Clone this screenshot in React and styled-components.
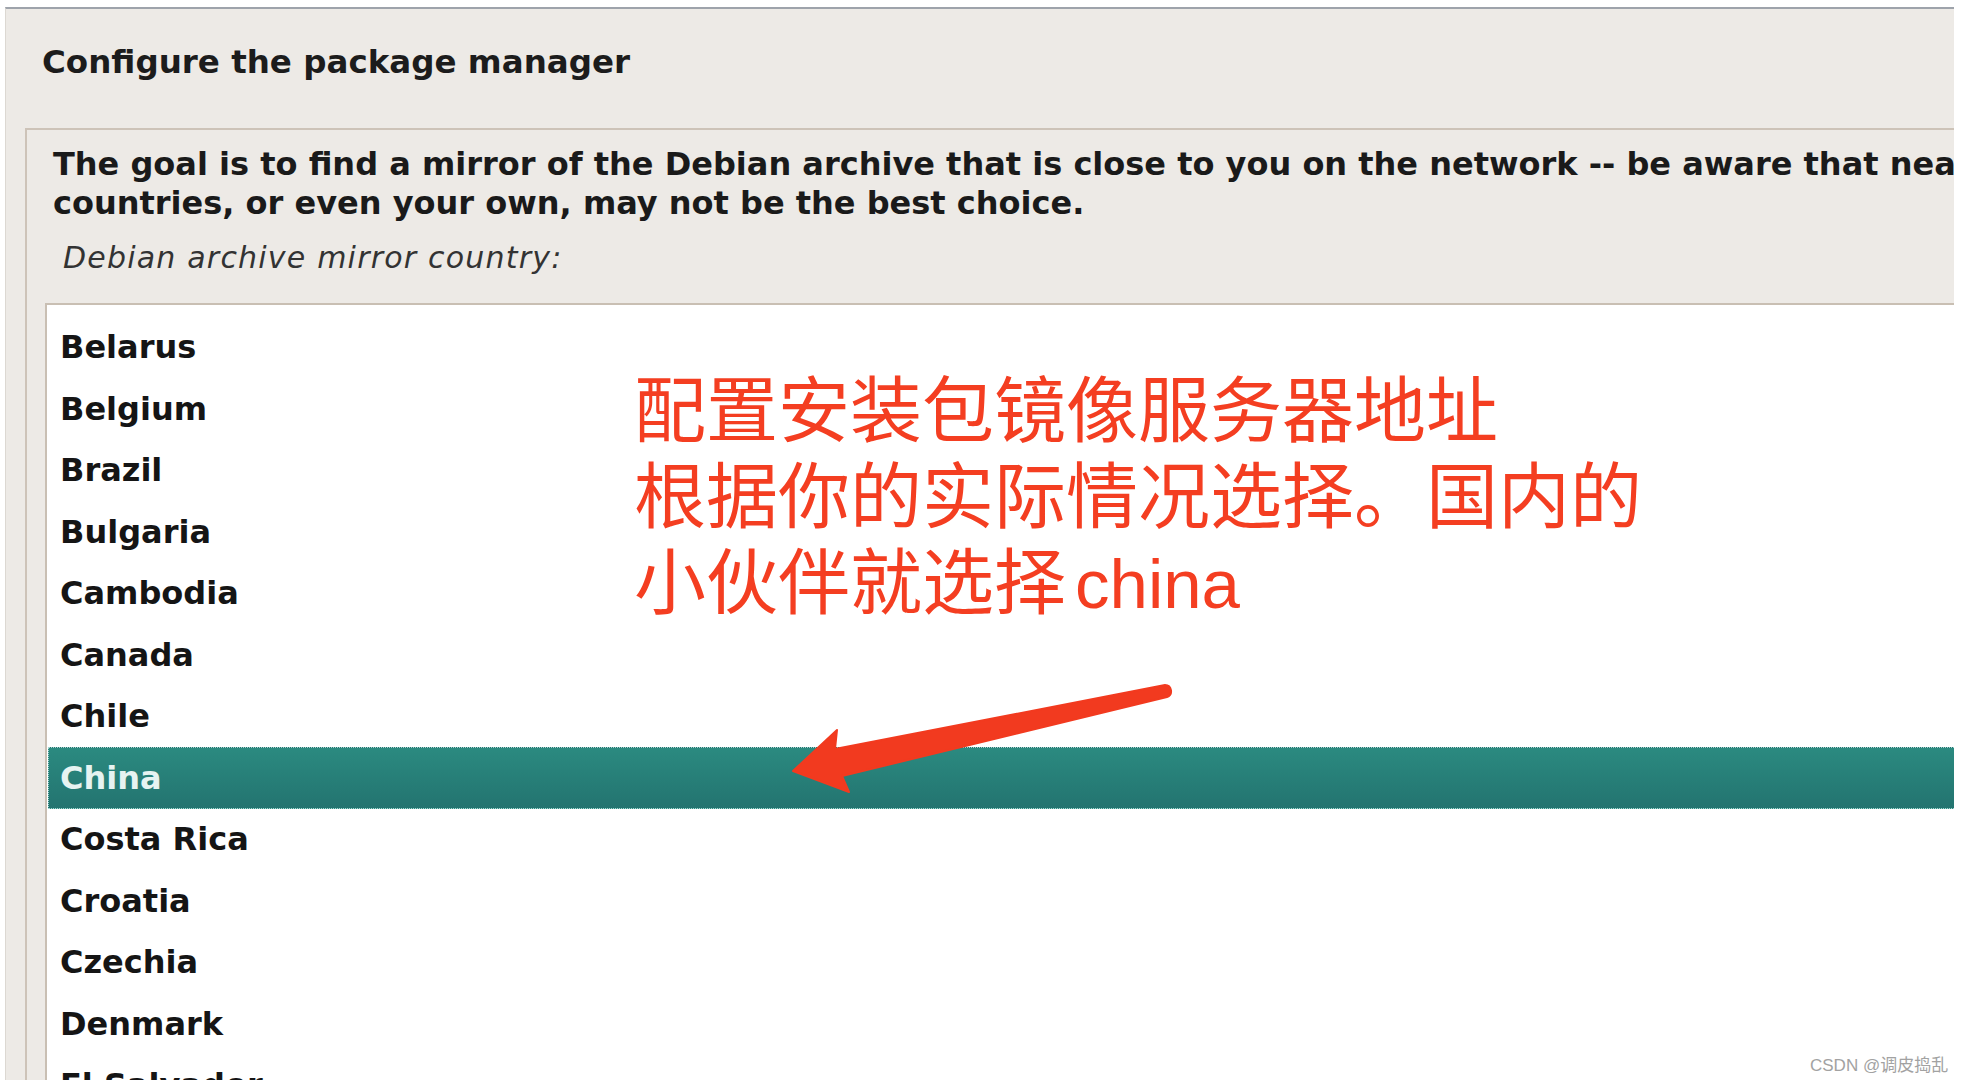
import styled, { createGlobalStyle } from 'styled-components';

const GlobalStyle = createGlobalStyle`
  html, body {
    margin: 0;
    padding: 0;
    background: #ffffff;
  }
  body {
    width: 1962px;
    height: 1084px;
    overflow: hidden;
  }
`;

const countries = [
  'Belarus', 'Belgium', 'Brazil', 'Bulgaria', 'Cambodia', 'Canada', 'Chile',
  'China', 'Costa Rica', 'Croatia', 'Czechia', 'Denmark', 'El Salvador',
];

const Arrow = () => (
  <ArrowSvg width="400" height="140" viewBox="0 0 400 140">
    <path
      d="M13 101 L57 60 L55 79 L385 15 A6.2 6.2 0 0 1 387 27 L62 106 L69 122 Z"
      fill="#f23a1f"
      stroke="#f23a1f"
      strokeWidth="2"
      strokeLinejoin="round"
    />
  </ArrowSvg>
);

export default function App() {
  return (
    <Page>
      <GlobalStyle />
      <Window>
        <Title>Configure the package manager</Title>
        <Panel>
          <Message>
            <div>The goal is to find a mirror of the Debian archive that is close to you on the network -- be aware that nearby</div>
            <div>countries, or even your own, may not be the best choice.</div>
          </Message>
          <Label>Debian archive mirror country:</Label>
          <ListBox>
            {countries.map((c) => (
              <Item key={c} selected={c === 'China'}>{c}</Item>
            ))}
          </ListBox>
        </Panel>
      </Window>

      <Note>
        <div>配置安装包镜像服务器地址</div>
        <div>根据你的实际情况选择。国内的</div>
        <div>小伙伴就选择<Latin>china</Latin></div>
      </Note>
      <Arrow />
      <Watermark>CSDN @调皮捣乱</Watermark>
    </Page>
  );
}

const Page = styled.div`
  position: relative;
  width: 1962px;
  height: 1084px;
  padding: 7px 0 0 5px;
  box-sizing: border-box;
  font-family: "DejaVu Sans", "Noto Sans CJK SC", sans-serif;
`;

const Window = styled.div`
  width: 1949px;
  height: 1073px;
  box-sizing: border-box;
  background: #edeae6;
  border-top: 2px solid #9ea3ab;
  border-left: 1px solid #dcd8d2;
  overflow: hidden;
  display: flex;
  flex-direction: column;
`;

const Title = styled.h1`
  margin: 0;
  padding: 34px 0 47px 36px;
  font-size: 32.5px;
  line-height: 38px;
  font-weight: bold;
  color: #1c1c1c;
  white-space: nowrap;
`;

const Panel = styled.div`
  flex: 1;
  display: flex;
  flex-direction: column;
  margin: 0 -20px 0 19px;
  padding: 15px 0 0 18px;
  border-top: 2px solid #cdc3b8;
  border-left: 2px solid #cdc3b8;
`;

const Message = styled.div`
  margin-left: 8px;
  font-size: 32px;
  line-height: 39px;
  font-weight: bold;
  color: #1a1a1a;
  white-space: nowrap;
`;

const Label = styled.div`
  margin: 17px 0 0 18px;
  font-size: 30px;
  line-height: 36px;
  font-style: italic;
  letter-spacing: 1.2px;
  color: #333333;
  white-space: nowrap;
`;

const ListBox = styled.div`
  flex: 1;
  margin-top: 27px;
  padding: 11.5px 0 0 1px;
  background: #ffffff;
  border-top: 2px solid #c9bfb3;
  border-left: 2px solid #c9bfb3;
`;

const Item = styled.div`
  height: 61.5px;
  box-sizing: border-box;
  display: flex;
  align-items: center;
  padding-left: 11px;
  font-size: 32px;
  font-weight: bold;
  white-space: nowrap;
  color: ${(p) => (p.selected ? '#e6f3f1' : '#151515')};
  background: ${(p) => (p.selected ? 'linear-gradient(#2b8a80, #237470)' : 'transparent')};
  border: 1px dotted ${(p) => (p.selected ? '#a6d6d1' : 'transparent')};
`;

const Note = styled.div`
  position: absolute;
  left: 634px;
  top: 362px;
  font-family: "Noto Sans CJK SC", sans-serif;
  font-size: 72px;
  line-height: 86px;
  font-weight: 400;
  color: #f43e21;
  white-space: nowrap;
`;

const Latin = styled.span`
  margin-left: 9px;
  font-family: "Liberation Sans", sans-serif;
  font-size: 69px;
`;

const ArrowSvg = styled.svg`
  position: absolute;
  left: 780px;
  top: 670px;
`;

const Watermark = styled.div`
  position: absolute;
  left: 1810px;
  top: 1056px;
  font-family: "Liberation Sans", "Noto Sans CJK SC", sans-serif;
  font-size: 17px;
  line-height: 20px;
  color: #a2a2a2;
  white-space: nowrap;
`;
